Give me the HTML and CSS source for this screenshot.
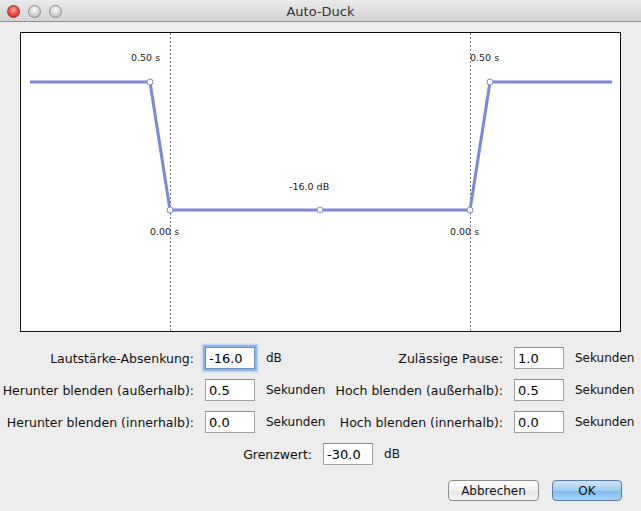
FILE: index.html
```html
<!DOCTYPE html>
<html>
<head>
<meta charset="utf-8">
<link rel="stylesheet" href="styles.css">
</head>
<body>
<div class="window">
  <div class="titlebar">
    <div class="lights">
      <span class="light red"></span>
      <span class="light grey"></span>
      <span class="light grey"></span>
    </div>
    <div class="title">Auto-Duck</div>
  </div>
  <div class="graph">
    <svg class="plot" width="599" height="298" viewBox="0 0 599 298">
      <line class="guide" x1="149.5" y1="0" x2="149.5" y2="298"/>
      <line class="guide" x1="449.5" y1="0" x2="449.5" y2="298"/>
      <polyline class="curve" points="9,49 129,49 149,177 449,177 469,49 591,49"/>
      <circle class="pt" cx="129" cy="49" r="3"/>
      <circle class="pt" cx="149" cy="177" r="3"/>
      <circle class="pt" cx="299" cy="177" r="3"/>
      <circle class="pt" cx="449" cy="177" r="3"/>
      <circle class="pt" cx="469" cy="49" r="3"/>
      <text class="lbl" x="110" y="28">0.50 s</text>
      <text class="lbl" x="449" y="28">0.50 s</text>
      <text class="lbl" x="129" y="202">0.00 s</text>
      <text class="lbl" x="429" y="202">0.00 s</text>
      <text class="lbl" x="268" y="157">-16.0 dB</text>
    </svg>
  </div>
  <div class="form">
    <label class="lab">Lautstärke-Absenkung:</label>
    <div class="cell"><input class="field focus" type="text" value="-16.0"></div>
    <span class="unit">dB</span>
    <label class="lab">Zulässige Pause:</label>
    <div class="cell"><input class="field" type="text" value="1.0"></div>
    <span class="unit">Sekunden</span>

    <label class="lab">Herunter blenden (außerhalb):</label>
    <div class="cell"><input class="field" type="text" value="0.5"></div>
    <span class="unit">Sekunden</span>
    <label class="lab">Hoch blenden (außerhalb):</label>
    <div class="cell"><input class="field" type="text" value="0.5"></div>
    <span class="unit">Sekunden</span>

    <label class="lab">Herunter blenden (innerhalb):</label>
    <div class="cell"><input class="field" type="text" value="0.0"></div>
    <span class="unit">Sekunden</span>
    <label class="lab">Hoch blenden (innerhalb):</label>
    <div class="cell"><input class="field" type="text" value="0.0"></div>
    <span class="unit">Sekunden</span>
  </div>
  <div class="threshold">
    <label class="tlab">Grenzwert:</label>
    <input class="field" type="text" value="-30.0">
    <span class="tunit">dB</span>
  </div>
  <div class="buttons">
    <button class="btn cancel">Abbrechen</button>
    <button class="btn ok">OK</button>
  </div>
</div>
</body>
</html>
```
FILE: styles.css
```css
html, body {
  margin: 0;
  padding: 0;
}
body {
  width: 641px;
  height: 511px;
  overflow: hidden;
  background: #ededed;
  font-family: "DejaVu Sans", "Liberation Sans", sans-serif;
  font-size: 12px;
  color: #111;
}
.window {
  width: 641px;
  height: 511px;
  background: #ededed;
}
.titlebar {
  height: 21px;
  border-bottom: 1px solid #8e8e8e;
  background: linear-gradient(#ebebeb, #d3d3d3);
  display: flex;
  align-items: center;
  position: relative;
}
.lights {
  display: flex;
  gap: 8px;
  padding-left: 7px;
  position: absolute;
  left: 0;
  top: 5px;
}
.light {
  width: 13px;
  height: 13px;
  border-radius: 50%;
  box-sizing: border-box;
}
.light.red {
  background: radial-gradient(circle at 50% 35%, #ffb3a8 0%, #f0544a 45%, #c0201a 100%);
  border: 1px solid #a1322c;
}
.light.grey {
  background: radial-gradient(circle at 50% 35%, #fdfdfd 0%, #d6d6d6 50%, #a9a9a9 100%);
  border: 1px solid #8f8f8f;
}
.title {
  flex: 1;
  text-align: center;
  font-size: 13px;
  color: #333;
  padding-top: 1px;
}
.graph {
  margin: 10px 0 0 20px;
  width: 599px;
  height: 298px;
  border: 1px solid #111;
  background: #fff;
}
.plot {
  display: block;
}
.guide {
  stroke: #777;
  stroke-width: 1;
  stroke-dasharray: 2 2;
}
.curve {
  fill: none;
  stroke: #7d86db;
  stroke-width: 3;
  stroke-linejoin: round;
}
.pt {
  fill: #fff;
  stroke: #7d86db;
  stroke-width: 1;
}
.lbl {
  font-family: "DejaVu Sans", sans-serif;
  font-size: 9.5px;
  fill: #222;
}
.form {
  display: grid;
  grid-template-columns: 200px 62px 68px 179px 62px 70px;
  grid-auto-rows: 22px;
  row-gap: 10px;
  align-items: center;
  margin-top: 15px;
}
.lab {
  text-align: right;
  padding-right: 6px;
  white-space: nowrap;
  font-size: 12.5px;
}
.cell {
  display: flex;
  padding-left: 5px;
}
.unit {
  padding-left: 4px;
  white-space: nowrap;
}
.field {
  width: 50px;
  height: 22px;
  box-sizing: border-box;
  border: 1px solid #a0a0a0;
  border-top-color: #8a8a8a;
  background: #fff;
  font-family: "DejaVu Sans", "Liberation Sans", sans-serif;
  font-size: 13px;
  color: #000;
  padding: 0 3px;
  margin: 0;
  outline: none;
}
.field.focus {
  border-color: #6f8fb8;
  box-shadow: 0 0 0 2px #8db7ea, 0 0 2px 3px #b7d2f2;
}
.threshold {
  display: flex;
  justify-content: center;
  align-items: center;
  margin-top: 10px;
  padding-left: 2px;
}
.tlab {
  margin-right: 11px;
  font-size: 12.5px;
}
.tunit {
  margin-left: 11px;
}
.buttons {
  display: flex;
  justify-content: flex-end;
  gap: 13px;
  padding-right: 19px;
  margin-top: 15px;
}
.btn {
  height: 21px;
  box-sizing: border-box;
  border-radius: 4px;
  font-family: "DejaVu Sans", "Liberation Sans", sans-serif;
  font-size: 12px;
  color: #111;
  padding: 0;
  margin: 0;
}
.cancel {
  width: 91px;
  border: 1px solid #8d8d8d;
  background: linear-gradient(#ffffff, #f1f1f1 50%, #e4e4e4 51%, #f6f6f6);
}
.ok {
  width: 70px;
  border: 1px solid #5a7fae;
  background: linear-gradient(#cfe6fb, #9fcdf3 50%, #7db9ef 51%, #a8d6fa);
}
```
